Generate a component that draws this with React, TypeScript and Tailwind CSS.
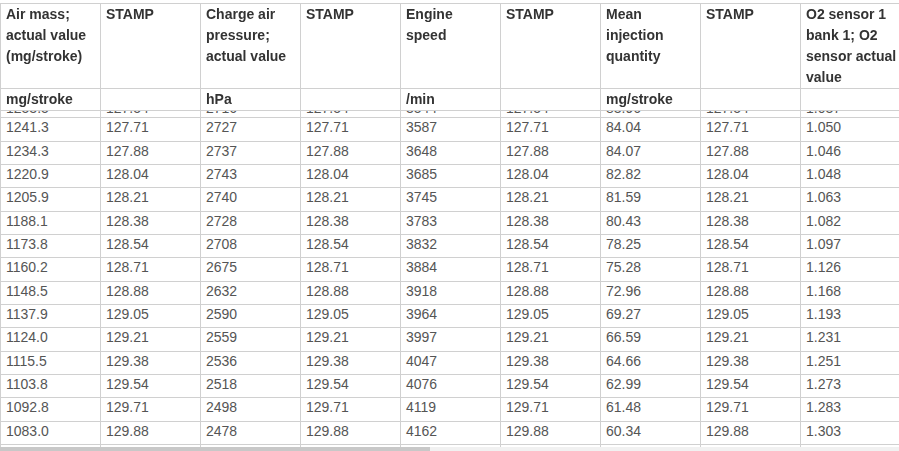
import { useLayoutEffect, useRef } from "react";

type Column = {
  title: string[];
  unit: string;
};

const columns: Column[] = [
  { title: ["Air mass;", "actual value", "(mg/stroke)"], unit: "mg/stroke" },
  { title: ["STAMP"], unit: "" },
  { title: ["Charge air", "pressure;", "actual value"], unit: "hPa" },
  { title: ["STAMP"], unit: "" },
  { title: ["Engine", "speed"], unit: "/min" },
  { title: ["STAMP"], unit: "" },
  { title: ["Mean", "injection", "quantity"], unit: "mg/stroke" },
  { title: ["STAMP"], unit: "" },
  { title: ["O2 sensor 1", "bank 1; O2", "sensor actual", "value"], unit: "" },
  { title: ["STAMP"], unit: "" },
];

// rows above the first full one are scrolled under the sticky header
const hiddenRows = [
  ["1284.7", "127.04", "2684", "127.04", "3412", "127.04", "83.12", "127.04", "1.012", "127.04"],
  ["1273.9", "127.21", "2695", "127.21", "3455", "127.21", "83.48", "127.21", "1.019", "127.21"],
  ["1262.1", "127.37", "2706", "127.37", "3498", "127.37", "83.77", "127.37", "1.028", "127.37"],
  ["1253.5", "127.54", "2716", "127.54", "3544", "127.54", "83.96", "127.54", "1.037", "127.54"],
];

const rows = [
  ["1241.3", "127.71", "2727", "127.71", "3587", "127.71", "84.04", "127.71", "1.050", "127.71"],
  ["1234.3", "127.88", "2737", "127.88", "3648", "127.88", "84.07", "127.88", "1.046", "127.88"],
  ["1220.9", "128.04", "2743", "128.04", "3685", "128.04", "82.82", "128.04", "1.048", "128.04"],
  ["1205.9", "128.21", "2740", "128.21", "3745", "128.21", "81.59", "128.21", "1.063", "128.21"],
  ["1188.1", "128.38", "2728", "128.38", "3783", "128.38", "80.43", "128.38", "1.082", "128.38"],
  ["1173.8", "128.54", "2708", "128.54", "3832", "128.54", "78.25", "128.54", "1.097", "128.54"],
  ["1160.2", "128.71", "2675", "128.71", "3884", "128.71", "75.28", "128.71", "1.126", "128.71"],
  ["1148.5", "128.88", "2632", "128.88", "3918", "128.88", "72.96", "128.88", "1.168", "128.88"],
  ["1137.9", "129.05", "2590", "129.05", "3964", "129.05", "69.27", "129.05", "1.193", "129.05"],
  ["1124.0", "129.21", "2559", "129.21", "3997", "129.21", "66.59", "129.21", "1.231", "129.21"],
  ["1115.5", "129.38", "2536", "129.38", "4047", "129.38", "64.66", "129.38", "1.251", "129.38"],
  ["1103.8", "129.54", "2518", "129.54", "4076", "129.54", "62.99", "129.54", "1.273", "129.54"],
  ["1092.8", "129.71", "2498", "129.71", "4119", "129.71", "61.48", "129.71", "1.283", "129.71"],
  ["1083.0", "129.88", "2478", "129.88", "4162", "129.88", "60.34", "129.88", "1.303", "129.88"],
  ["1074.6", "130.04", "2459", "130.04", "4201", "130.04", "59.38", "130.04", "1.322", "130.04"],
];

export default function App() {
  const scrollRef = useRef<HTMLDivElement>(null);
  const anchorRef = useRef<HTMLTableRowElement>(null);

  useLayoutEffect(() => {
    const box = scrollRef.current;
    const row = anchorRef.current;
    if (!box || !row) return;
    box.scrollTop = 0;
    const top = box.getBoundingClientRect().top;
    const bottom = row.getBoundingClientRect().bottom;
    // last hidden row's bottom border lands just under the header
    box.scrollTop = bottom - top - 118;
  }, []);

  const allRows = [...hiddenRows, ...rows];
  const anchor = hiddenRows.length - 1;

  return (
    <div className="h-[451px] w-[899px] overflow-hidden bg-white font-['Liberation_Sans',Arial,sans-serif] text-[14px]">
      <div ref={scrollRef} className="h-[447px] overflow-hidden">
        <table className="table-fixed border-separate border-spacing-0 w-[1001px]">
          <colgroup>
            {columns.map((_, i) => (
              <col key={i} className={i === 0 ? "w-[101px]" : "w-[100px]"} />
            ))}
          </colgroup>
          <thead className="sticky top-[3px] z-10">
            <tr>
              {columns.map((col, i) => (
                <th
                  key={i}
                  className={`border-t border-r border-b border-[#d0d0d0] bg-white pl-[5px] pr-[3px] py-0 text-left align-top font-bold leading-[21px] whitespace-nowrap text-[#333] h-[86px] ${
                    i === 0 ? "border-l" : ""
                  }`}
                >
                  {col.title.map((line, j) => (
                    <div key={j}>{line}</div>
                  ))}
                </th>
              ))}
            </tr>
            <tr>
              {columns.map((col, i) => (
                <th
                  key={i}
                  className={`border-r border-b border-[#d0d0d0] bg-white pl-[5px] pr-[3px] py-0 text-left align-top font-bold leading-[21px] whitespace-nowrap text-[#333] ${
                    i === 0 ? "border-l" : ""
                  }`}
                >
                  {col.unit || "\u00a0"}
                </th>
              ))}
            </tr>
          </thead>
          <tbody>
            {allRows.map((row, r) => (
              <tr key={r} ref={r === anchor ? anchorRef : undefined}>
                {row.map((v, i) => (
                  <td
                    key={i}
                    className={`border-r border-b border-[#d0d0d0] pl-[5px] pr-[3px] whitespace-nowrap text-[#555] ${
                      r === anchor
                        ? "pt-[5px] pb-0 leading-[17.33px]"
                        : "pt-0 pb-[3.33px] leading-[19px]"
                    } ${i === 0 ? "border-l" : ""}`}
                  >
                    {v}
                  </td>
                ))}
              </tr>
            ))}
          </tbody>
        </table>
      </div>
      <div className="h-[15px] bg-[#f1f1f1]">
        <div className="h-full w-[430px] bg-[#c8c8c8]" />
      </div>
    </div>
  );
}
